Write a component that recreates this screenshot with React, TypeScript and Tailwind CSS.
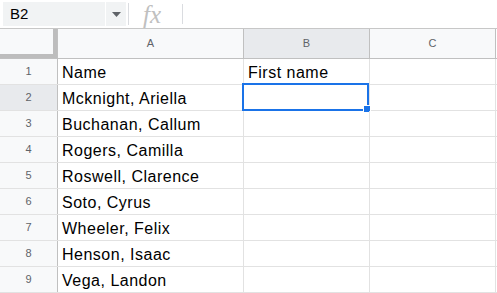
export default function App() {
  const rows = [
    ["Name", "First name"],
    ["Mcknight, Ariella", ""],
    ["Buchanan, Callum", ""],
    ["Rogers, Camilla", ""],
    ["Roswell, Clarence", ""],
    ["Soto, Cyrus", ""],
    ["Wheeler, Felix", ""],
    ["Henson, Isaac", ""],
    ["Vega, Landon", ""],
  ];

  return (
    <div
      className="w-[497px] h-[293px] overflow-hidden bg-white"
      style={{ fontFamily: "Arial, 'Liberation Sans', sans-serif" }}
    >
      {/* formula bar */}
      <div className="h-[29px] flex items-center border-b border-[#c7c7c7]">
        <div className="ml-[3px] h-[24px] w-[102px] bg-[#f1f3f4] flex items-center pl-[7px] text-[15px] text-black">
          B2
        </div>
        <div className="ml-px h-[24px] w-[20px] bg-[#f1f3f4] flex items-center justify-center">
          <svg width="9" height="5" viewBox="0 0 9 5">
            <path d="M0 0h9L4.5 5z" fill="#5f6368" />
          </svg>
        </div>
        <div className="ml-[2px] h-[22px] w-px bg-[#dadce0]" />
        <div
          className="ml-[14px] w-[26px] text-[25px] leading-[25px] italic text-[#c0c0c0]"
          style={{ fontFamily: "'Liberation Serif', serif" }}
        >
          fx
        </div>
        <div className="ml-[13px] h-[20px] w-px bg-[#dadce0]" />
      </div>

      {/* column headers */}
      <div className="flex h-[30px] border-b border-[#c0c0c0]">
        <div className="w-[58px] shrink-0 border-r border-[#c0c0c0] bg-[#f8f9fa]">
          <div className="w-[57px] h-[29px] border-r-4 border-b-4 border-[#bdbdbd]" />
        </div>
        <div className="w-[186px] shrink-0 border-r border-[#c0c0c0] bg-[#f8f9fa] flex items-center justify-center text-[11px] text-[#5f6368]">
          A
        </div>
        <div className="w-[126px] shrink-0 border-r border-[#c0c0c0] bg-[#e8eaed] flex items-center justify-center text-[11px] text-[#5f6368]">
          B
        </div>
        <div className="w-[126px] shrink-0 border-r border-[#c0c0c0] bg-[#f8f9fa] flex items-center justify-center text-[11px] text-[#5f6368]">
          C
        </div>
      </div>

      {/* rows */}
      {rows.map((r, i) => (
        <div key={i} className="flex h-[26px] border-b border-[#e2e2e2]">
          <div
            className={
              "w-[58px] shrink-0 border-r border-[#c0c0c0] flex items-center justify-center text-[11px] text-[#5f6368] " +
              (i === 1 ? "bg-[#e8eaed]" : "bg-[#f8f9fa]")
            }
          >
            {i + 1}
          </div>
          <div className="w-[186px] shrink-0 border-r border-[#e2e2e2] pl-[4px] flex items-end pb-[2px] text-[16px] tracking-[0.5px] text-black leading-[18px] whitespace-nowrap">
            {r[0]}
          </div>
          <div className="relative w-[126px] shrink-0 border-r border-[#e2e2e2] pl-[4px] flex items-end pb-[2px] text-[16px] tracking-[0.5px] text-black leading-[18px] whitespace-nowrap">
            {r[1]}
            {i === 1 && (
              <>
                <div className="absolute left-[-2px] top-[-2px] w-[127px] h-[28px] border-2 border-[#1a73e8]" />
                <div className="absolute left-[119px] top-[20px] w-[8px] h-[8px] bg-[#1a73e8] border border-white" />
              </>
            )}
          </div>
          <div className="w-[126px] shrink-0 border-r border-[#e2e2e2]" />
        </div>
      ))}
    </div>
  );
}
